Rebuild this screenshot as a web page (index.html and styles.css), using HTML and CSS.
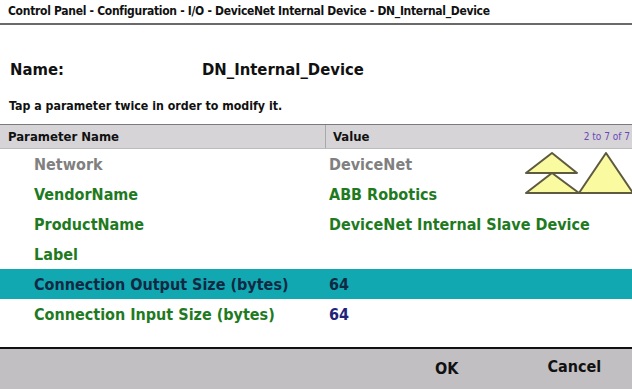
FILE: index.html
```html
<!DOCTYPE html>
<html>
<head>
<meta charset="utf-8">
<link rel="stylesheet" href="styles.css">
</head>
<body>
<div class="screen">
  <div class="title">Control Panel - Configuration - I/O - DeviceNet Internal Device - DN_Internal_Device</div>
  <div class="namerow"><span class="namelabel">Name:</span><span class="nameval">DN_Internal_Device</span></div>
  <div class="hint">Tap a parameter twice in order to modify it.</div>
  <div class="table">
    <div class="thead">
      <div class="th th-name">Parameter Name</div>
      <div class="th th-value">Value<span class="count">2 to 7 of 7</span></div>
    </div>
    <div class="tbody">
      <div class="row dim"><div class="c-name">Network</div><div class="c-val">DeviceNet</div></div>
      <div class="row"><div class="c-name">VendorName</div><div class="c-val">ABB Robotics</div></div>
      <div class="row"><div class="c-name">ProductName</div><div class="c-val">DeviceNet Internal Slave Device</div></div>
      <div class="row"><div class="c-name">Label</div><div class="c-val"></div></div>
      <div class="row sel"><div class="c-name">Connection Output Size (bytes)</div><div class="c-val">64</div></div>
      <div class="row"><div class="c-name">Connection Input Size (bytes)</div><div class="c-val num">64</div></div>
      <div class="scroll">
        <svg width="110" height="44" viewBox="0 0 110 44">
          <polygon points="28,1 53,21 2,21" fill="#fafaa0" stroke="#5e5a40" stroke-width="2" stroke-linejoin="round"/>
          <polygon points="28,21 55,41 2,41" fill="#fafaa0" stroke="#5e5a40" stroke-width="2" stroke-linejoin="round"/>
          <polygon points="82,1 109,41 55,41" fill="#fafaa0" stroke="#5e5a40" stroke-width="2" stroke-linejoin="round"/>
        </svg>
      </div>
    </div>
  </div>
  <div class="footer">
    <div class="btn ok">OK</div>
    <div class="btn cancel">Cancel</div>
  </div>
</div>
</body>
</html>
```
FILE: styles.css
```css
html, body { margin: 0; padding: 0; }
body { width: 632px; height: 389px; overflow: hidden; background: #fff; font-family: "DejaVu Sans Condensed", "DejaVu Sans", sans-serif; font-weight: bold; }
.screen { width: 632px; height: 389px; display: flex; flex-direction: column; }
.title { height: 23px; line-height: 23px; padding-left: 8px; font-size: 12px; letter-spacing: -0.3px; color: #111; border-bottom: 2px solid #6a6a6a; white-space: nowrap; }
.namerow { margin-top: 33px; height: 22px; display: flex; align-items: center; font-size: 16.5px; color: #111; }
.namelabel { width: 192px; padding-left: 10px; }
.hint { margin-top: 17px; height: 18px; padding-left: 9px; font-size: 12.3px; color: #111; line-height: 18px; }
.table { margin-top: 9px; }
.thead { display: flex; height: 23px; background: #d6d4d6; border-top: 1px solid #7a7a7a; border-bottom: 1px solid #bcbcbc; }
.th { font-size: 13px; color: #111; line-height: 23px; }
.th-name { width: 317px; padding-left: 8px; border-right: 1px solid #a8a8a8; }
.th-value { flex: 1; padding-left: 7px; position: relative; }
.count { position: absolute; right: 2px; top: 0; font-weight: normal; font-size: 10px; color: #6a4ab8; }
.tbody { position: relative; }
.row { display: flex; height: 30px; align-items: center; font-size: 16px; color: #1f7a1f; }
.row.dim { color: #808080; }
.row.sel { background: #12a8b2; color: #102a44; }
.c-name { width: 295px; padding-left: 34px; white-space: nowrap; }
.c-val { white-space: nowrap; }
.c-val.num { color: #22227a; }
.scroll { position: absolute; left: 524px; top: 3px; line-height: 0; }
.footer { margin-top: auto; height: 40px; background: #c2bfc2; border-top: 2px solid #111; display: flex; align-items: center; }
.btn { font-size: 16px; color: #111; font-weight: bold; }
.ok { margin-left: 435px; margin-top: -2px; }
.cancel { margin-left: 89px; margin-top: -6px; }
```
